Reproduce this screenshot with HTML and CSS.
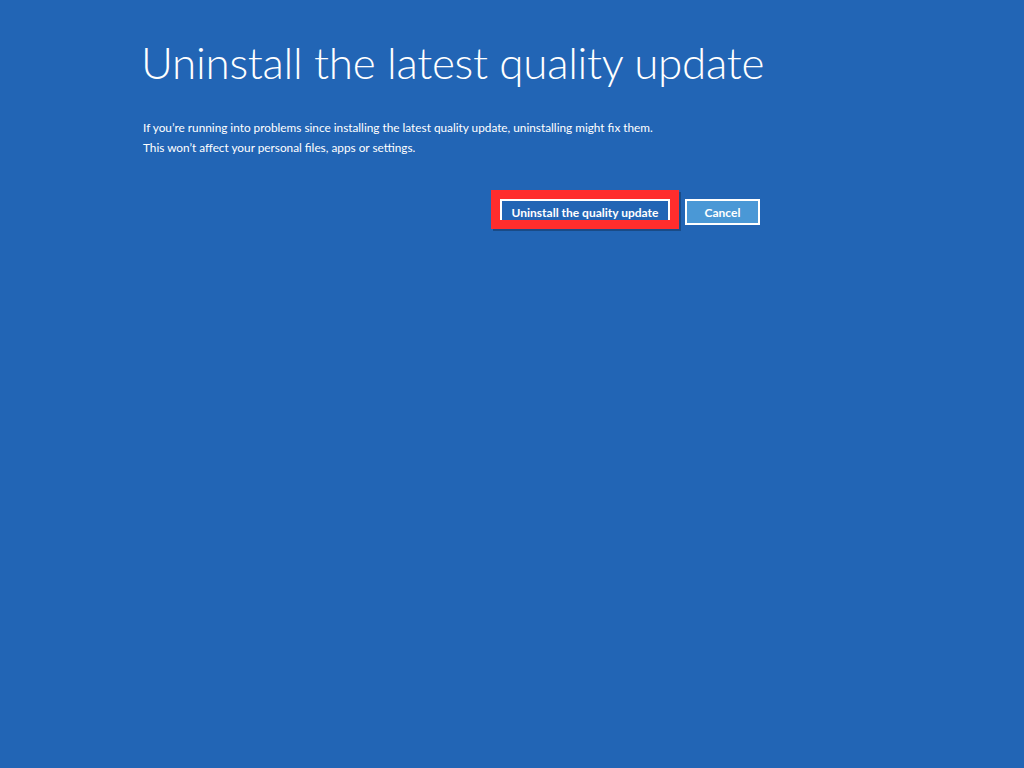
FILE: index.html
```html
<!DOCTYPE html>
<html lang="en">
<head>
<meta charset="UTF-8">
<title>Uninstall the latest quality update</title>
<link rel="stylesheet" href="styles.css">
</head>
<body>

<div class="page">
  <h1 class="title">Uninstall the latest quality update</h1>
  <p class="desc">If you’re running into problems since installing the latest quality update, uninstalling might fix them.<br>This won’t affect your personal files, apps or settings.</p>

  <div class="actions">
    <div class="marked">
      <button class="btn">Uninstall the quality update</button>
      <span class="highlight"></span>
    </div>
    <button class="btn btn-cancel">Cancel</button>
  </div>
</div>

</body>
</html>
```

FILE: styles.css
```css
body {
  margin: 0;
  min-height: 100vh;
  background: #2265b5;
  color: #fff;
  font-family: Lato, "Open Sans", sans-serif;
}
.page {
  width: 617px;
  margin-left: 143px;
  padding-top: 36px;
}
.title {
  margin: 0 0 0 -2px;
  font-size: 44px;
  font-weight: 300;
  letter-spacing: -0.3px;
  line-height: 52px;
  white-space: nowrap;
}
.desc {
  margin: 30px 0 0;
  font-size: 11.8px;
  line-height: 20px;
}
.actions {
  display: flex; justify-content: flex-end;
  gap: 15px;
  margin-top: 41px;
}
.marked { position: relative; }
.btn {
  display: block;
  height: 26px;
  padding: 0;
  border: 2px solid #fff;
  background: #2265b5;
  color: #fff;
  font-family: Lato, "Open Sans", sans-serif;
  font-size: 12px; font-weight: 700;
  white-space: nowrap;
}
.marked .btn { width: 170px; }
.btn-cancel {
  width: 75px;
  background: #4a98d6;
}
/* red annotation frame drawn over the button */
.highlight {
  position: absolute;
  top: -9px; left: -9px; right: -9px; bottom: -4px;
  border: 9px solid #ff2d2d;
  box-shadow: 2px 2px 0 rgba(0, 0, 0, 0.25);
}
```
